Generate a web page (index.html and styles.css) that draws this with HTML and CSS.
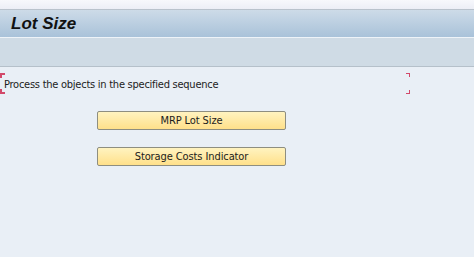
FILE: index.html
```html
<!DOCTYPE html>
<html lang="en">
<head>
  <meta charset="UTF-8" />
  <title>Lot Size</title>
  <link rel="stylesheet" href="styles.css">
</head>
<body>
  <div class="top-strip"></div>
  <div class="title-bar">
    <h1>Lot Size</h1>
  </div>
  <div class="toolbar"></div>
  <div class="content">
    <div class="group-row">
      <span class="corner left-top"></span>
      <span class="corner left-bottom"></span>
      <span class="corner right-top"></span>
      <span class="corner right-bottom"></span>
      <span class="label">Process the objects in the specified sequence</span>
    </div>
    <button class="sap-btn">MRP Lot Size</button>
    <button class="sap-btn">Storage Costs Indicator</button>
  </div>
</body>
</html>
```

FILE: styles.css
```css
body {
  margin: 0;
  width: 474px;
  height: 257px;
  overflow: hidden;
  font-family: "DejaVu Sans Condensed", "DejaVu Sans", sans-serif;
  font-stretch: condensed;
  background-color: #e9eff6;
  color: #1c1c1c;
}

.top-strip {
  height: 9px;
  background: linear-gradient(#f7f8fc, #eceef6);
  border-bottom: 1px solid #b9c2cc;
}

.title-bar {
  height: 27px;
  background: linear-gradient(#cddbe8, #a9c2d9);
  border-bottom: 1px solid #eef3f8;
  display: flex;
  align-items: center;
  padding-left: 11px;
}

h1 {
  margin: 0;
  font-family: "Liberation Sans", Arial, sans-serif;
  font-size: 17px;
  font-style: italic;
  font-weight: bold;
  color: #111;
}

.toolbar {
  height: 28px;
  background-color: #cfdbe5;
  border-bottom: 1px solid #b5c0ca;
}

.content {
  height: 189px;
  padding-top: 6px;
}

.group-row {
  position: relative;
  width: 410px;
  height: 21px;
  font-size: 11px;
  letter-spacing: -0.25px;
}

.label {
  display: block;
  padding: 5px 0 0 4px;
}

.corner {
  position: absolute;
  width: 3px;
  height: 3px;
  border: 0 solid #d2496a;
}

.left-top { left: 0; top: 0; border-width: 2px 0 0 2px; }
.left-bottom { left: 0; bottom: 0; border-width: 0 0 2px 2px; }
.right-top { right: 0; top: 0; border-width: 1px 1px 0 0; }
.right-bottom { right: 0; bottom: 0; border-width: 0 1px 1px 0; }

.sap-btn {
  display: block;
  width: 189px;
  height: 19px;
  margin: 17px 0 0 97px;
  padding: 0;
  font-family: "DejaVu Sans Condensed", "DejaVu Sans", sans-serif;
  font-stretch: condensed;
  font-size: 11px;
  letter-spacing: -0.1px;
  color: #1c1c1c;
  background: linear-gradient(#fff3c0, #ffe08a);
  border: 1px solid #8e8e80;
  border-radius: 2px;
}
```
